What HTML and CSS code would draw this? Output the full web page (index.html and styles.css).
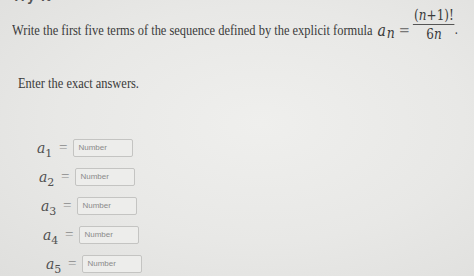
FILE: index.html
```html
<!DOCTYPE html>
<html>
<head>
<meta charset="utf-8">
<link rel="stylesheet" href="styles.css">
</head>
<body>
<div class="page">
  <div class="cut">Try It</div>
  <p class="question"><span class="qtext">Write the first five terms of the sequence defined by the explicit formula</span><span class="math"><i class="var-a">a</i><i class="sub-i">n</i><span class="eq">=</span><span class="frac"><span class="num">(<i>n</i>+1)!</span><span class="den">6<i>n</i></span></span><span class="dot">.</span></span></p>
  <p class="enter">Enter the exact answers.</p>
  <div class="rows">
    <div class="row r1"><span class="lbl"><i>a</i><sub>1</sub></span><span class="eq">=</span><span class="box">Number</span></div>
    <div class="row r2"><span class="lbl"><i>a</i><sub>2</sub></span><span class="eq">=</span><span class="box">Number</span></div>
    <div class="row r3"><span class="lbl"><i>a</i><sub>3</sub></span><span class="eq">=</span><span class="box">Number</span></div>
    <div class="row r4"><span class="lbl"><i>a</i><sub>4</sub></span><span class="eq">=</span><span class="box">Number</span></div>
    <div class="row r5"><span class="lbl"><i>a</i><sub>5</sub></span><span class="eq">=</span><span class="box">Number</span></div>
  </div>
</div>
</body>
</html>
```
FILE: styles.css
```css
html, body {
  margin: 0;
  padding: 0;
}
body {
  width: 474px;
  height: 276px;
  overflow: hidden;
  background: radial-gradient(ellipse at 55% 45%, #efefed 0%, #e8e8e6 55%, #dfdfdd 100%);
  font-family: "Liberation Serif", "Times New Roman", serif;
  color: #3a3a3a;
}
.page {
  padding: 0 0 0 12px;
}
.cut {
  font-family: "Liberation Sans", Arial, sans-serif;
  font-weight: bold;
  font-size: 14px;
  line-height: 14px;
  margin-top: -11px;
  color: #555;
  letter-spacing: 1px;
}
.question {
  margin: 16px 0 0 0;
  font-size: 15px;
  line-height: 20px;
  display: flex;
  align-items: center;
  white-space: nowrap;
  transform: scaleX(0.83);
  transform-origin: left center;
}
.math {
  display: inline-flex;
  align-items: center;
  margin-left: 6px;
  font-family: "DejaVu Serif", serif;
}
.var-a {
  font-size: 17px;
}
.sub-i {
  font-size: 15px;
  position: relative;
  top: 3px;
  margin-left: 1px;
}
.math .eq {
  margin: 0 4px 0 5px;
  color: #777;
  font-size: 16px;
}
.frac {
  display: inline-flex;
  flex-direction: column;
  align-items: center;
  font-size: 14.5px;
  margin-top: -11px;
}
.num {
  border-bottom: 1px solid #555;
  padding: 0 1px 1px;
  line-height: 15px;
}
.den {
  line-height: 14px;
  padding-top: 2px;
}
.dot {
  font-family: "Liberation Serif", serif;
  align-self: flex-end;
  margin-bottom: 2px;
}
.enter {
  margin: 34px 0 0 6px;
  font-size: 15px;
  transform: scaleX(0.83);
  transform-origin: left center;
}
.rows {
  display: flex;
  flex-direction: column;
  gap: 10px;
  margin-top: 46px;
}
.row {
  display: flex;
  align-items: center;
  height: 19px;
}
.r1 { margin-left: 25px; }
.r2 { margin-left: 27px; }
.r3 { margin-left: 29px; }
.r4 { margin-left: 31px; }
.r5 { margin-left: 34px; }
.lbl {
  font-family: "DejaVu Serif", serif;
  font-size: 14px;
  width: 19px;
  color: #505050;
}
.lbl sub {
  font-style: normal;
  font-size: 11px;
  vertical-align: -4px;
  line-height: 0;
}
.row .eq {
  font-size: 15px;
  color: #8a8a8a;
  margin: 0 6px 0 3px;
}
.box {
  width: 54px;
  height: 16px;
  border: 1px solid #c4c4c2;
  border-radius: 2px;
  background: #ededeb;
  font-family: "Liberation Sans", Arial, sans-serif;
  font-size: 8px;
  color: #8a8a8a;
  line-height: 16px;
  padding-left: 4px;
}
```
